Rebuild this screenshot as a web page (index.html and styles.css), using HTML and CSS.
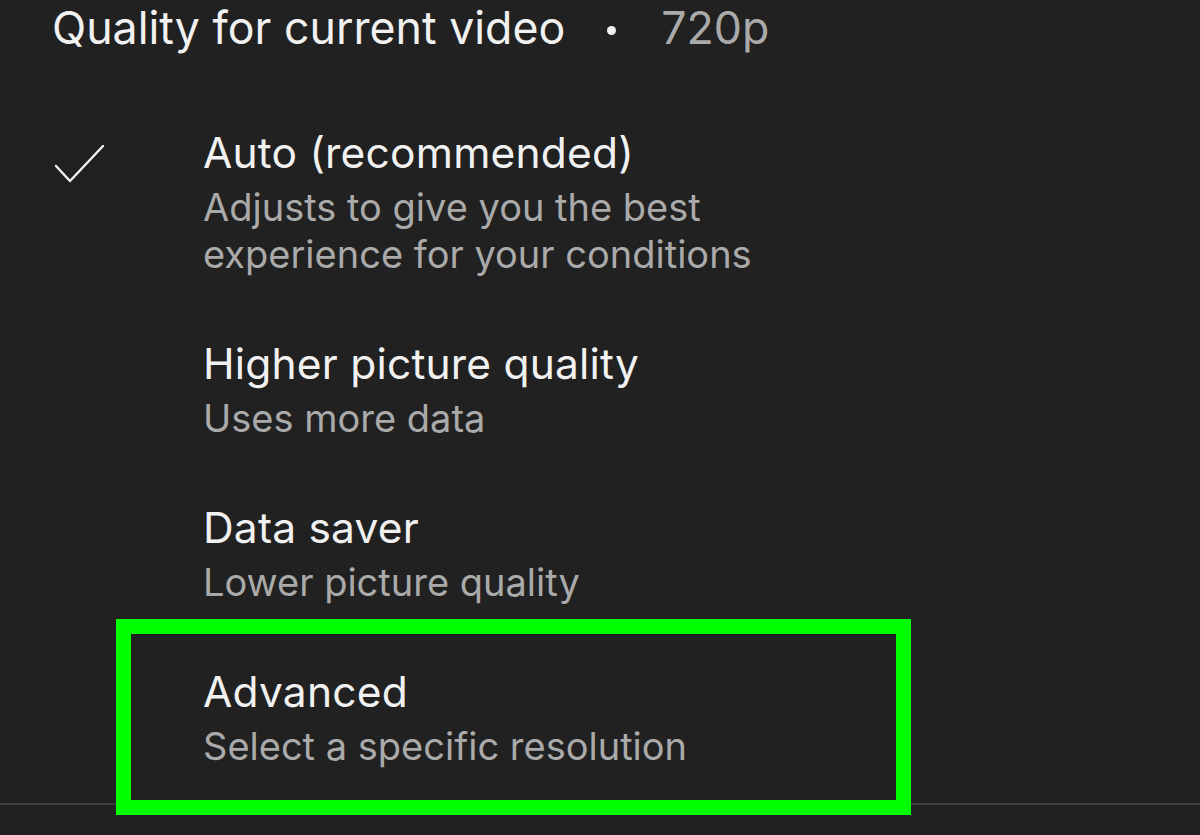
FILE: index.html
```html
<!DOCTYPE html>
<html lang="en">
<head>
<meta charset="utf-8">
<title>Quality for current video</title>
<link rel="stylesheet" href="styles.css">
</head>
<body>
<div class="sheet">
  <div class="header">
    <span class="header-title">Quality for current video</span>
    <span class="header-dot"></span>
    <span class="header-value">720p</span>
  </div>
  <div class="list">
    <div class="item">
      <div class="check-col">
        <svg class="check" width="56" height="44" viewBox="0 0 56 44"><polyline points="4,26 18,41 51,6" fill="none" stroke="#f1f1f1" stroke-width="2.4" stroke-linecap="round" stroke-linejoin="round"/></svg>
      </div>
      <div class="text">
        <div class="title">Auto (recommended)</div>
        <div class="sub">Adjusts to give you the best<br>experience for your conditions</div>
      </div>
    </div>
    <div class="item">
      <div class="check-col"></div>
      <div class="text">
        <div class="title">Higher picture quality</div>
        <div class="sub">Uses more data</div>
      </div>
    </div>
    <div class="item">
      <div class="check-col"></div>
      <div class="text">
        <div class="title">Data saver</div>
        <div class="sub">Lower picture quality</div>
      </div>
    </div>
    <div class="item item-advanced">
      <div class="check-col"></div>
      <div class="text">
        <div class="title">Advanced</div>
        <div class="sub">Select a specific resolution</div>
      </div>
    </div>
  </div>
</div>
</body>
</html>
```
FILE: styles.css
```css
html, body {
  margin: 0;
  padding: 0;
  background: #212121;
}
body {
  font-family: Inter, "Noto Sans", sans-serif;
  color: #f1f1f1;
  width: 1200px;
  height: 835px;
  overflow: hidden;
}
.sheet {
  display: flex;
  flex-direction: column;
}
.header {
  height: 100px;
  box-sizing: border-box;
  padding: 0 0 0 52px;
  display: flex;
  align-items: flex-start;
  font-size: 44.7px;
  line-height: 56px;
  white-space: nowrap;
}
.header-title {
  color: #f1f1f1;
}
.header-dot {
  flex: none;
  width: 9px;
  height: 9px;
  border-radius: 50%;
  background: #f1f1f1;
  margin: 26px 45px 0 42px;
}
.header-value {
  color: #aaaaaa;
}
.list {
  display: flex;
  flex-direction: column;
  border-bottom: 2px solid #3d3d3d;
}
.item {
  display: flex;
  padding: 29px 0 33px 52px;
}
.check-col {
  width: 151px;
  flex: none;
}
.check {
  display: block;
  margin-top: 11px;
}
.title {
  font-size: 42.5px;
  line-height: 48px;
  letter-spacing: 0.2px;
  color: #f1f1f1;
  white-space: nowrap;
}
.sub {
  margin-top: 7px;
  font-size: 38px;
  line-height: 47px;
  color: #aaaaaa;
  white-space: nowrap;
}
.item-advanced {
  position: relative;
}
.item-advanced::after {
  content: "";
  position: absolute;
  left: 116px;
  top: -20px;
  width: 795px;
  height: 196px;
  box-sizing: border-box;
  border: 15px solid #00ff00;
}
```
